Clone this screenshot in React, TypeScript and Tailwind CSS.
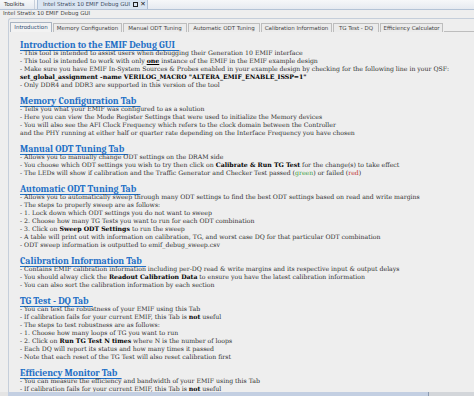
import React from 'react'

type Seg = string | { b: string } | { u: string } | { c: string; color: string }

interface Section {
  title: string
  lines: Seg[][]
}

const SECTIONS: Section[] = [
  {
    title: 'Introduction to the EMIF Debug GUI',
    lines: [
      ['- This tool is intended to assist users when debugging their Generation 10 EMIF interface'],
      ['- This tool is intended to work with only ', { u: 'one' }, ' instance of the EMIF in the EMIF example design'],
      ['- Make sure you have EMIF In-System Sources & Probes enabled in your example design by checking for the following line in your QSF:'],
      [{ b: 'set_global_assignment -name VERILOG_MACRO "ALTERA_EMIF_ENABLE_ISSP=1"' }],
      ['- Only DDR4 and DDR3 are supported in this version of the tool'],
    ],
  },
  {
    title: 'Memory Configuration Tab',
    lines: [
      ['- Tells you what your EMIF was configured to as a solution'],
      ['- Here you can view the Mode Register Settings that were used to initialize the Memory devices'],
      ['- You will also see the AFI Clock Frequency which refers to the clock domain between the Controller'],
      ['and the PHY running at either half or quarter rate depending on the Interface Frequency you have chosen'],
    ],
  },
  {
    title: 'Manual ODT Tuning Tab',
    lines: [
      ['- Allows you to manually change ODT settings on the DRAM side'],
      ['- You choose which ODT settings you wish to try then click on ', { b: 'Calibrate & Run TG Test' }, ' for the change(s) to take effect'],
      ['- The LEDs will show if calibration and the Traffic Generator and Checker Test passed (', { c: 'green', color: '#3c9a3c' }, ') or failed (', { c: 'red', color: '#c03030' }, ')'],
    ],
  },
  {
    title: 'Automatic ODT Tuning Tab',
    lines: [
      ['- Allows you to automatically sweep through many ODT settings to find the best ODT settings based on read and write margins'],
      ['- The steps to properly sweep are as follows:'],
      ['- 1. Lock down which ODT settings you do not want to sweep'],
      ['- 2. Choose how many TG Tests you want to run for each ODT combination'],
      ['- 3. Click on ', { b: 'Sweep ODT Settings' }, ' to run the sweep'],
      ['- A table will print out with information on calibration, TG, and worst case DQ for that particular ODT combination'],
      ['- ODT sweep information is outputted to emif_debug_sweep.csv'],
    ],
  },
  {
    title: 'Calibration Information Tab',
    lines: [
      ['- Contains EMIF calibration information including per-DQ read & write margins and its respective input & output delays'],
      ['- You should alway click the ', { b: 'Readout Calibration Data' }, ' to ensure you have the latest calibration information'],
      ['- You can also sort the calibration information by each section'],
    ],
  },
  {
    title: 'TG Test - DQ Tab',
    lines: [
      ['- You can test the robustness of your EMIF using this Tab'],
      ['- If calibration fails for your current EMIF, this Tab is ', { b: 'not' }, ' useful'],
      ['- The steps to test robustness are as follows:'],
      ['- 1. Choose how many loops of TG you want to run'],
      ['- 2. Click on ', { b: 'Run TG Test N times' }, ' where N is the number of loops'],
      ['- Each DQ will report its status and how many times it passed'],
      ['- Note that each reset of the TG Test will also reset calibration first'],
    ],
  },
  {
    title: 'Efficiency Monitor Tab',
    lines: [
      ['- You can measure the efficiency and bandwidth of your EMIF using this Tab'],
      ['- If calibration fails for your current EMIF, this Tab is ', { b: 'not' }, ' useful'],
    ],
  },
]

// label + fixed width in px, measured off the tab strip
const TABS: [string, string][] = [
  ['Introduction', 'w-[42px]'],
  ['Memory Configuration', 'w-[69px]'],
  ['Manual ODT Tuning', 'w-[64px]'],
  ['Automatic ODT Tuning', 'w-[72px]'],
  ['Calibration Information', 'w-[71px]'],
  ['TG Test - DQ', 'w-[46px]'],
  ['Efficiency Calculator', 'w-[63px]'],
]

function renderSeg(s: Seg, i: number) {
  if (typeof s === 'string') return <span key={i}>{s}</span>
  if ('b' in s) return <b key={i} className="font-bold text-black">{s.b}</b>
  if ('u' in s) return <b key={i} className="font-bold text-black underline">{s.u}</b>
  return <span key={i} style={{ color: s.color }}>{s.c}</span>
}

export default function App() {
  return (
    <div className="w-[474px] h-[396px] overflow-hidden bg-[#eeeeee] flex flex-col font-[family-name:'DejaVu_Sans',sans-serif]">
      {/* window tabs */}
      <div className="h-[10px] shrink-0 flex items-end bg-gradient-to-b from-[#f6f7f9] to-[#e6eaf0] border-b border-[#b4c3d6] text-[5.5px] text-[#333]">
        <div className="h-[9px] w-[35px] pl-[4px] flex items-center border-r border-[#c8d0dc] whitespace-nowrap">Toolkits</div>
        <div className="h-[10px] w-[111px] ml-[2px] pl-[5px] flex items-center gap-[2px] bg-[#dae5f2] border-x border-t border-[#aebfd5] text-[#3a4a60] whitespace-nowrap">
          <span>Intel Stratix 10 EMIF Debug GUI</span>
          <span className="w-[5px] h-[5px] shrink-0 border border-[#222] ml-[1px]" />
          <span className="font-bold text-[6.5px] leading-none text-[#111]">✕</span>
        </div>
      </div>
      <div className="h-[7px] shrink-0 pl-[3px] flex items-center text-[5.5px] text-[#444] whitespace-nowrap">Intel Stratix 10 EMIF Debug GUI</div>

      {/* tabbed panel */}
      <div className="flex-1 min-h-0 ml-[8px] mt-[1px] border-l border-t border-[#c5ceda] rounded-tl-[3px] flex flex-col">
        <div className="h-[12px] shrink-0 mt-[1px] pl-[1px] flex items-end gap-[1px] text-[5.5px]">
          {TABS.map(([t, w], i) => (
            <div
              key={t}
              className={
                i === 0
                  ? `${w} h-[10px] flex items-center justify-center whitespace-nowrap bg-[#f2f2f2] border-x border-t border-[#a9b4c2] rounded-t-[1px] text-[#2f4f74]`
                  : `${w} h-[9px] flex items-center justify-center whitespace-nowrap bg-[#ebebeb] border-x border-t border-[#bdbdbd] text-[#444]`
              }
            >
              {t}
            </div>
          ))}
          <div className="flex-1 h-[1px] bg-[#bdbdbd]" />
        </div>

        <div className="flex-1 min-h-0 overflow-hidden pl-[11px] pt-[9px] font-[family-name:'DejaVu_Serif',serif] text-[6.2px] leading-[8px] text-[#2e2e2e]">
          {SECTIONS.map((s, i) => (
            <div key={s.title} className={i === 0 ? '' : 'mt-[8px]'}>
              <div className="h-[8px] font-serif text-[9.7px] leading-[8px] font-bold text-[#1f70c6] underline decoration-[1px] underline-offset-[1.5px] whitespace-pre">
                {s.title + '  '}
              </div>
              {s.lines.map((l, j) => (
                <div key={j} className="whitespace-nowrap">
                  {l.map(renderSeg)}
                </div>
              ))}
            </div>
          ))}
        </div>
      </div>

      {/* scrollbar */}
      <div className="h-[4px] flex shrink-0">
        <div className="w-[8px] bg-[#e4e4e4]" />
        <div className="w-[421px] bg-[#c3cfe2] border-r border-[#8d9cb2]" />
        <div className="flex-1 bg-[#d3d6da]" />
      </div>
    </div>
  )
}
